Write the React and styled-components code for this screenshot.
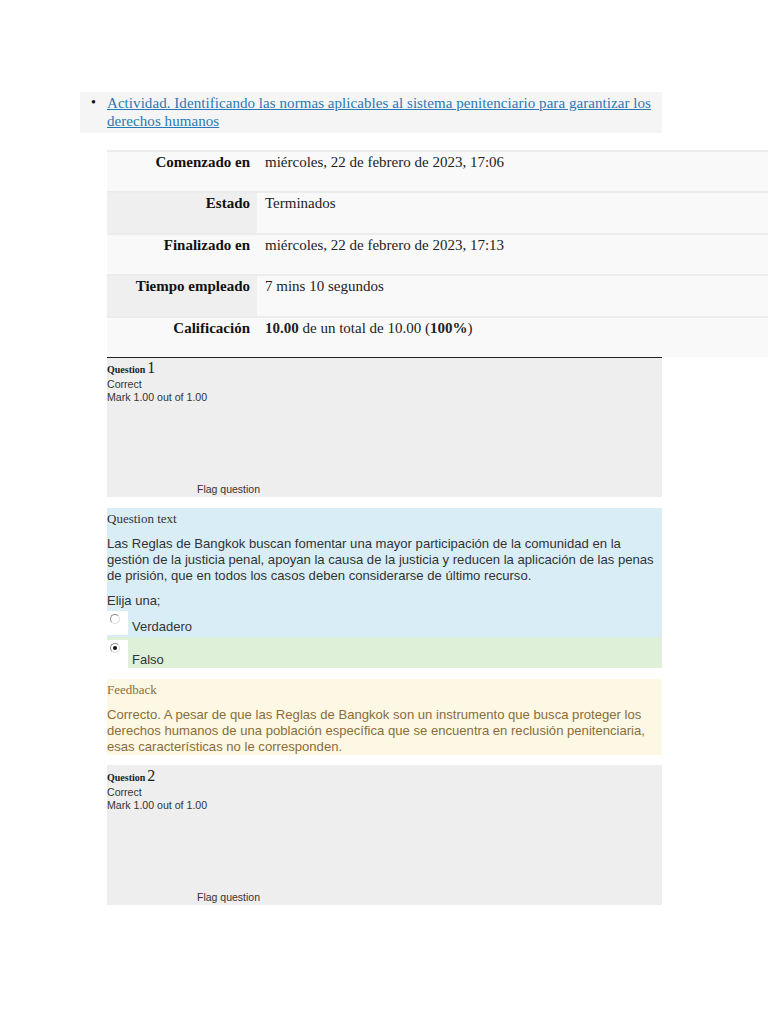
import React from 'react';
import styled, { createGlobalStyle } from 'styled-components';

const GlobalStyle = createGlobalStyle`
  body {
    margin: 0;
    background: #ffffff;
    font-family: "Liberation Serif", "Times New Roman", serif;
    color: #333333;
  }
`;

const Page = styled.div`
  padding: 92px 0 100px 0;
  overflow: hidden;
`;

// link at the top
const LinkItem = styled.div`
  display: flex;
  margin-left: 80px;
  width: 582px;
  background: #f5f5f5;
  padding: 2px 0 3px 0;
`;

const Bullet = styled.span`
  width: 27px;
  flex: none;
  font-size: 14px;
  line-height: 18px;
  text-align: center;
  color: #111;
`;

const ActivityLink = styled.a`
  font-size: 15px;
  line-height: 18px;
  color: #2a78b3;
  text-decoration: underline;
  letter-spacing: 0.06px;
`;

// summary table
const Summary = styled.div`
  margin: 17px 0 0 107px;
  width: 661px;
`;

const Row = styled.div`
  display: flex;
  height: 39.4px;
  border-top: 2px solid #ececec;
  background: #f9f9f9;
`;

const Label = styled.div`
  width: 143px;
  flex: none;
  padding: 1px 7px 0 0;
  text-align: right;
  font-size: 15px;
  line-height: 18px;
  font-weight: bold;
  color: #111;
  background: ${({ $shade }) => ($shade ? '#efefef' : 'transparent')};
`;

const Value = styled.div`
  padding: 1px 0 0 8px;
  font-size: 15px;
  line-height: 18px;
  color: #222;
`;

// question blocks
const QuestionInfo = styled.div`
  display: flex;
  flex-direction: column;
  margin: ${({ $top }) => $top}px 0 0 107px;
  width: 555px;
  height: 139px;
  border-top: 1px solid;
  border-color: ${({ $noLine }) => ($noLine ? '#eeeeee' : '#222')};
  background: #eeeeee;
  font-family: "Liberation Sans", Arial, sans-serif;
  font-size: 10.6px;
  color: #333;
`;

const QNo = styled.div`
  font-family: "Liberation Serif", "Times New Roman", serif;
  font-size: 10px;
  font-weight: bold;
  line-height: 16px;
  padding-top: 2px;
  color: #222;

  span {
    font-size: 16px;
    font-weight: normal;
    margin-left: 2px;
  }
`;

const InfoLine = styled.div`
  line-height: 13px;
`;

const Flag = styled.div`
  margin-top: auto;
  padding: 0 0 1px 90px;
  font-size: 10.5px;
  line-height: 14px;
`;

const Content = styled.div`
  margin: 11px 0 0 107px;
  width: 555px;
  background: #d9edf7;
  padding-top: 3px;
`;

const SmallTitle = styled.div`
  font-size: 13px;
  line-height: 16px;
  color: ${({ $color }) => $color || '#333'};
`;

const Para = styled.p`
  margin: 9px 0 0 0;
  font-family: "Liberation Sans", Arial, sans-serif;
  font-size: 13.1px;
  line-height: 16px;
  color: ${({ $color }) => $color || '#333'};
  padding-right: 2px;
`;

const Prompt = styled.div`
  margin-top: 9px;
  font-family: "Liberation Sans", Arial, sans-serif;
  font-size: 13px;
  line-height: 16px;
  color: #333;
`;

const Option = styled.div`
  display: flex;
  align-items: flex-end;
  background: ${({ $correct }) => ($correct ? '#dff0d8' : 'transparent')};
  padding-top: ${({ $correct }) => ($correct ? '3px' : '2px')};
  padding-bottom: ${({ $correct }) => ($correct ? '0' : '2px')};
`;

const RadioBox = styled.div`
  width: 21px;
  height: ${({ $h }) => $h}px;
  flex: none;
  background: #ffffff;
  position: relative;
`;

const Radio = styled.span`
  position: absolute;
  left: 3px;
  top: 3px;
  width: 8px;
  height: 8px;
  border-radius: 50%;
  border: 1px solid #8a8a8a;
  border-right-color: #dcdcdc;
  border-bottom-color: #dcdcdc;
  background: #fff;

  &::after {
    content: '';
    display: ${({ $checked }) => ($checked ? 'block' : 'none')};
    position: absolute;
    left: 2px;
    top: 2px;
    width: 4px;
    height: 4px;
    border-radius: 50%;
    background: #111;
  }
`;

const OptionText = styled.span`
  padding: 0 0 0 4px;
  font-family: "Liberation Sans", Arial, sans-serif;
  font-size: 13px;
  line-height: 16px;
  color: #333;
`;

const Feedback = styled.div`
  margin: 11px 0 0 107px;
  width: 555px;
  height: 73px;
  background: #fcf8e3;
  padding-top: 3px;
`;

const rows = [
  { label: 'Comenzado en', value: 'miércoles, 22 de febrero de 2023, 17:06' },
  { label: 'Estado', value: 'Terminados', shade: true },
  { label: 'Finalizado en', value: 'miércoles, 22 de febrero de 2023, 17:13' },
  { label: 'Tiempo empleado', value: '7 mins 10 segundos', shade: true },
  {
    label: 'Calificación',
    value: (
      <>
        <b>10.00</b> de un total de 10.00 (<b>100%</b>)
      </>
    ),
  },
];

const QuestionHead = ({ n, top }) => (
  <QuestionInfo $top={top} $noLine={n !== 1}>
    <QNo>
      Question<span>{n}</span>
    </QNo>
    <InfoLine>Correct</InfoLine>
    <InfoLine>Mark 1.00 out of 1.00</InfoLine>
    <Flag>Flag question</Flag>
  </QuestionInfo>
);

export default function App() {
  return (
    <Page>
      <GlobalStyle />
      <LinkItem>
        <Bullet>•</Bullet>
        <ActivityLink href="#">
          Actividad. Identificando las normas aplicables al sistema penitenciario para garantizar los
          derechos humanos
        </ActivityLink>
      </LinkItem>

      <Summary>
        {rows.map((r) => (
          <Row key={r.label}>
            <Label $shade={r.shade}>{r.label}</Label>
            <Value>{r.value}</Value>
          </Row>
        ))}
      </Summary>

      <QuestionHead n={1} top={0} />

      <Content>
        <SmallTitle>Question text</SmallTitle>
        <Para>
          Las Reglas de Bangkok buscan fomentar una mayor participación de la comunidad en la gestión
          de la justicia penal, apoyan la causa de la justicia y reducen la aplicación de las penas de
          prisión, que en todos los casos deben considerarse de último recurso.
        </Para>
        <Prompt>Elija una;</Prompt>
        <Option>
          <RadioBox $h={24}>
            <Radio />
          </RadioBox>
          <OptionText>Verdadero</OptionText>
        </Option>
        <Option $correct>
          <RadioBox $h={28}>
            <Radio $checked />
          </RadioBox>
          <OptionText>Falso</OptionText>
        </Option>
      </Content>

      <Feedback>
        <SmallTitle $color="#8a6d3b">Feedback</SmallTitle>
        <Para $color="#8a6d3b">
          Correcto. A pesar de que las Reglas de Bangkok son un instrumento que busca proteger los
          derechos humanos de una población específica que se encuentra en reclusión penitenciaria,
          esas características no le corresponden.
        </Para>
      </Feedback>

      <QuestionHead n={2} top={10} />
    </Page>
  );
}
